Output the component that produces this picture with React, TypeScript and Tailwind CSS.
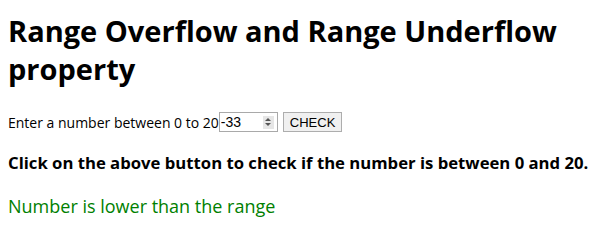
import { useState } from "react";

export default function App() {
  const [value, setValue] = useState("-33");

  return (
    <main className="min-h-screen bg-white px-2 text-black font-['Open_Sans',sans-serif]">
      <h1 className="pt-[12px] text-[29px] font-bold leading-[38px]">
        Range Overflow and Range Underflow property
      </h1>

      <div className="mt-[24px] flex items-center h-[20px] text-[14px]">
        <span>Enter a number between 0 to 20</span>
        <div className="flex items-center h-[20px] w-[59px] border border-[#a9a9a9] bg-white">
          <input
            type="text"
            value={value}
            onChange={(e) => setValue(e.target.value)}
            className="w-[40px] px-[1px] text-[14px] outline-none font-['Liberation_Sans',sans-serif]"
          />
          {/* spinner */}
          <div className="ml-auto mr-[3px] flex flex-col items-center justify-center gap-[2px] w-[11px] h-[13px] bg-[#e6e6e6]">
            <span className="block w-0 h-0 border-x-[3px] border-x-transparent border-b-[3px] border-b-[#555]" />
            <span className="block w-0 h-0 border-x-[3px] border-x-transparent border-t-[3px] border-t-[#555]" />
          </div>
        </div>
        <button className="ml-[5px] h-[20px] px-[6px] border border-[#adadad] bg-[#f0f0f0] text-[13px] leading-none font-['Liberation_Sans',sans-serif]">
          CHECK
        </button>
      </div>

      <p className="mt-[18px] text-[16.7px] font-bold whitespace-nowrap">
        Click on the above button to check if the number is between 0 and 20.
      </p>

      <p className="mt-[18px] text-[18px] text-[#008000]">Number is lower than the range</p>
    </main>
  );
}
